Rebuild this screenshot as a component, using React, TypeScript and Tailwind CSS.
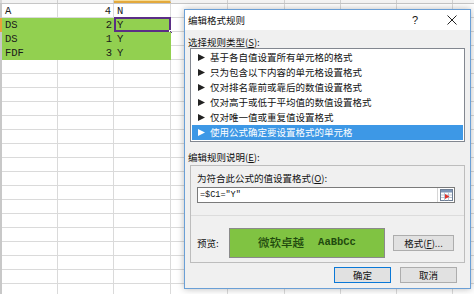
import React from 'react';

const COLS = [56, 56, 57, 57, 57, 56, 56, 56, 57];
const ROWS = [
  ['A', '4', 'N'],
  ['DS', '2', 'Y'],
  ['DS', '1', 'Y'],
  ['FDF', '3', 'Y'],
];
const RULES = [
  '基于各自值设置所有单元格的格式',
  '只为包含以下内容的单元格设置格式',
  '仅对排名靠前或靠后的数值设置格式',
  '仅对高于或低于平均值的数值设置格式',
  '仅对唯一值或重复值设置格式',
  '使用公式确定要设置格式的单元格',
];

const cjk = { fontFamily: '"Noto Sans CJK SC", "Noto Sans", sans-serif' };
const mono = { fontFamily: '"Liberation Mono", "DejaVu Sans Mono", monospace' };

function Sheet() {
  const rows = Array.from({ length: 21 }, (_, i) => ROWS[i] || []);
  return (
    <div className="flex flex-col" style={mono}>
      {/* column header strip, mostly scrolled off */}
      <div className="flex h-[4px] border-b border-[#c6c6c6]">
        <div className="w-[2px] shrink-0 bg-[#d8d8d8]" />
        {COLS.map((w, c) => (
          <div
            key={c}
            style={{ width: w }}
            className={`shrink-0 border-r border-[#d0d0d0] ${c === 2 ? 'bg-[#f7dc95] border-b-2 border-b-[#e3a93c]' : 'bg-[#f3f3f3]'}`}
          />
        ))}
      </div>
      {rows.map((r, i) => {
        const green = i >= 1 && i <= 3;
        return (
          <div key={i} className="flex h-[14px] text-[10.5px] leading-[14px] text-[#1a1a1a]">
            <div className={`w-[2px] shrink-0 ${i === 1 ? 'bg-[#e8a33a]' : 'bg-[#c8c8c8]'}`} />
            {COLS.map((w, c) => {
              const filled = green && c < 3;
              return (
                <div
                  key={c}
                  style={{ width: w }}
                  className={`relative shrink-0 whitespace-pre ${filled ? 'bg-[#92d050]' : 'border-r border-b border-[#dadada]'} ${c === 1 ? 'text-right pr-[2px]' : 'pl-[3px]'}`}
                >
                  {r[c] ?? ''}
                  {i === 1 && c === 2 && (
                    <div className="absolute left-0 top-[-1px] right-0 bottom-0 border-2 border-[#5b2e86]">
                      <div className="absolute right-[-4px] bottom-[-4px] w-[4px] h-[4px] bg-[#5b2e86] border border-white" />
                    </div>
                  )}
                </div>
              );
            })}
          </div>
        );
      })}
    </div>
  );
}

function Arrow({ color }: { color: string }) {
  return (
    <svg width="7" height="7" viewBox="0 0 7 7" className="shrink-0">
      <path d="M0 0L7 3.5L0 7Z" fill={color} />
    </svg>
  );
}

function RangeIcon() {
  return (
    <svg width="13" height="12" viewBox="0 0 13 12">
      <rect x="0.5" y="0.5" width="12" height="11" fill="#ffffff" stroke="#6f7f95" />
      <rect x="1" y="1" width="11" height="2.5" fill="#7d95b6" />
      <path d="M1 6H12M1 8.5H12M4.5 3.5V11.5M8.5 3.5V11.5" stroke="#a9b6c8" strokeWidth="0.8" />
      <path d="M5 5L9.5 7.5L5 10Z" fill="#e0312b" />
    </svg>
  );
}

function Dialog() {
  return (
    <div
      className="absolute left-[184px] top-[9px] w-[287px] h-[280px] flex flex-col border border-[#6a9fd6] bg-[#f0f0f0] shadow-[0_0_7px_rgba(0,0,0,0.28)] text-[9.5px] text-[#111]"
      style={cjk}
    >
      <div className="h-[20px] bg-white flex items-center pl-[3px] shrink-0">
        <span>编辑格式规则</span>
        <span className="ml-auto w-[20px] text-center text-[11px] leading-none" style={{ fontFamily: '"Liberation Sans", sans-serif' }}>?</span>
        <span className="ml-[17px] mr-[8px] w-[20px] flex justify-center">
          <svg width="10" height="10" viewBox="0 0 10 10">
            <path d="M0.5 0.5L9.5 9.5M9.5 0.5L0.5 9.5" stroke="#222" strokeWidth="1" />
          </svg>
        </span>
      </div>

      <div className="flex flex-col px-[5px]">
        <div className="mt-[6px] h-[12px] leading-[12px] -ml-[2px]">
          选择规则类型(<span className="underline">S</span>):
        </div>
        <div className="border border-[#828790] bg-white py-[1px]">
          {RULES.map((t, i) => {
            const sel = i === RULES.length - 1;
            return (
              <div
                key={t}
                className={`h-[15px] flex items-center gap-[4px] pl-[6px] mx-[1px] ${sel ? 'bg-[#3d98e6] text-white' : ''}`}
              >
                <Arrow color={sel ? '#ffffff' : '#222222'} />
                <span className="ml-[1px]">{t}</span>
              </div>
            );
          })}
        </div>

        <div className="mt-[9px] h-[13px] leading-[13px] -ml-[2px]">
          编辑规则说明(<span className="underline">E</span>):
        </div>
        <div className="mt-[1px] border border-[#bdbdbd] flex flex-col pt-[6px] pb-[4px]">
          <div className="h-[12px] leading-[12px] pl-[6px]">
            为符合此公式的值设置格式(<span className="underline">O</span>):
          </div>
          <div className="mt-[3px] ml-[6px] mr-[9px] h-[16px] border border-[#7a7a7a] bg-white flex items-center">
            <span className="pl-[2px] text-[8.5px]" style={mono}>=$C1="Y"</span>
            <span className="ml-auto h-full w-[17px] flex items-center justify-center border-l border-[#d6d6d6]">
              <RangeIcon />
            </span>
          </div>
          <div className="mt-[12px] h-px bg-[#dcdcdc]" />
          <div className="mt-[12px] flex items-center pl-[6px]">
            <span className="w-[32px]">预览:</span>
            <div className="w-[156px] h-[30px] border border-[#8a8a8a] bg-[#80c342] flex items-center justify-center gap-[14px] text-[#1f4a0e]">
              <span className="text-[11.5px] font-medium">微软卓越</span>
              <span className="text-[10.5px] font-bold" style={mono}>AaBbCc</span>
            </div>
            <div className="ml-[8px] w-[61px] h-[16px] border border-[#adadad] bg-[#e1e1e1] flex items-center justify-center">
              格式(<span className="underline">F</span>)...
            </div>
          </div>
        </div>

        <div className="mt-[4px] flex justify-end gap-[9px] pr-[8px]">
          <div className="w-[57px] h-[16px] border border-[#0a78d7] bg-[#e1e1e1] flex items-center justify-center">确定</div>
          <div className="w-[57px] h-[16px] border border-[#adadad] bg-[#e1e1e1] flex items-center justify-center">取消</div>
        </div>
      </div>
    </div>
  );
}

export default function App() {
  return (
    <div className="relative w-[474px] h-[294px] overflow-hidden bg-white">
      <Sheet />
      <Dialog />
    </div>
  );
}
